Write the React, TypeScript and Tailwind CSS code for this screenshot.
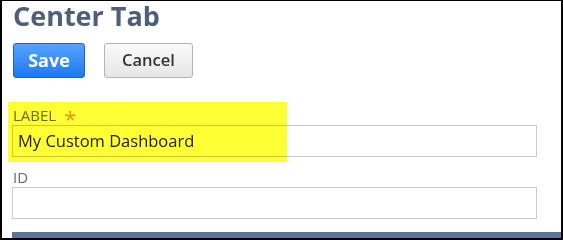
export default function App() {
  return (
    <div className="w-[563px] h-[240px] bg-white border-black border-t border-l-2 border-r-2 border-b-2 flex flex-col font-['Open_Sans',sans-serif] overflow-hidden">
      <div className="flex flex-col pl-[10px] pr-[24px]">
        <h1 className="text-[27px] leading-[30px] font-bold text-[#4d5f79] h-[30px] pl-px">Center Tab</h1>

        <div className="flex gap-[19px] mt-[12px] pl-px">
          <button className="w-[72px] h-[35px] rounded-[3px] border border-[#1b62c9] bg-gradient-to-b from-[#55a3ff] to-[#1f78f0] text-white font-bold text-[18px]">
            Save
          </button>
          <button className="w-[89px] h-[35px] rounded-[3px] border border-[#b5b5b5] bg-gradient-to-b from-[#fafafa] to-[#e6e6e6] text-[#333] font-semibold text-[16.5px]">
            Cancel
          </button>
        </div>

        <div className="relative mt-[27px]">
          <div className="flex items-start gap-[8px] h-[20px] pl-px">
            <span className="text-[15px] leading-[20px] text-[#6b6b6b]">LABEL</span>
            <span className="text-[22px] leading-[20px] h-[20px] text-[#e69500] pt-[3px]">*</span>
          </div>
          <div className="h-[32px] border border-[#cccccc] flex items-center px-[5px] text-[16.5px] text-[#222]">
            My Custom Dashboard
          </div>
          <div className="absolute -left-[4px] -top-[3px] w-[279px] h-[60px] bg-[#ffff33] mix-blend-multiply pointer-events-none" />
        </div>

        <div className="mt-[10px] flex items-center h-[20px] pl-px">
          <span className="text-[15px] leading-[20px] text-[#6b6b6b]">ID</span>
        </div>
        <div className="h-[32px] border border-[#cccccc]" />
      </div>
      <div className="h-[6px] bg-[#5f7597] ml-[10px] mt-[13px]" />
    </div>
  );
}
